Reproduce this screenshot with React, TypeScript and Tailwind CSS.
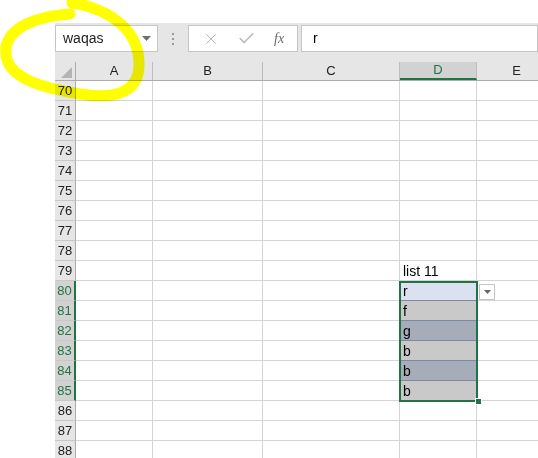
import { X, Check } from "lucide-react";

const cols = [
  { name: "A", w: "w-[77px]" },
  { name: "B", w: "w-[110px]" },
  { name: "C", w: "w-[137px]" },
  { name: "D", w: "w-[77px]" },
  { name: "E", w: "w-[80px]" },
];

const rows = Array.from({ length: 19 }, (_, i) => 70 + i);

// values in column D
const dValues: Record<number, string> = {
  79: "list 11",
  80: "r",
  81: "f",
  82: "g",
  83: "b",
  84: "b",
  85: "b",
};

// fill for the selected list cells
const dFill: Record<number, string> = {
  80: "bg-[#dce1f1] border-b-[#7b88a6]",
  81: "bg-[#c9c9c9] border-b-[#7b88a6]",
  82: "bg-[#a6acb8] border-b-[#7b88a6]",
  83: "bg-[#c9c9c9] border-b-[#7b88a6]",
  84: "bg-[#a6acb8] border-b-[#7b88a6]",
  85: "bg-[#c9c9c9] border-b-[#7b88a6]",
};

const isSel = (r: number) => r >= 80 && r <= 85;

export default function App() {
  return (
    <div
      className="relative w-[538px] h-[458px] overflow-hidden bg-white text-black"
      style={{ fontFamily: '"Liberation Sans", Arial, sans-serif' }}
    >
      <div className="pl-[55px] pt-[23px]">
        {/* Formula bar */}
        <div className="bg-[#e6e6e6] h-[39px] flex items-start pt-[2px]">
          <div className="w-[103px] h-[27px] bg-white border border-[#c6c6c6] flex items-center pl-[7px] pr-[6px]">
            <span className="flex-1 text-[14px] text-[#222]">waqas</span>
            <svg width="9" height="5" viewBox="0 0 9 5">
              <path d="M0 0 L9 0 L4.5 5 Z" fill="#6e6e6e" />
            </svg>
          </div>
          <div className="w-[30px] h-[27px] flex flex-col items-center justify-center gap-[3px]">
            <span className="w-[2px] h-[2px] bg-[#9a9a9a]" />
            <span className="w-[2px] h-[2px] bg-[#9a9a9a]" />
            <span className="w-[2px] h-[2px] bg-[#9a9a9a]" />
          </div>
          <div className="w-[110px] h-[27px] bg-white border border-[#c6c6c6] flex items-center justify-around px-[4px]">
            <X className="w-[18px] h-[18px] text-[#b5b5b5]" strokeWidth={1.3} />
            <Check className="w-[19px] h-[19px] text-[#b5b5b5]" strokeWidth={1.8} />
            <span
              className="text-[14px] italic text-[#6a6a6a]"
              style={{ fontFamily: '"Liberation Serif", "Times New Roman", serif' }}
            >
              fx
            </span>
          </div>
          <div className="ml-[3px] flex-1 h-[27px] bg-white border border-[#c6c6c6] flex items-center pl-[11px] text-[14px]">
            r
          </div>
        </div>

        {/* Column headers */}
        <div className="flex h-[19px] bg-[#e6e6e6] border-b border-[#ababab]">
          <div className="w-[21px] shrink-0 border-r border-[#ababab] relative">
            <svg className="absolute right-[3px] bottom-[2px]" width="11" height="11" viewBox="0 0 11 11">
              <path d="M11 0 L11 11 L0 11 Z" fill="#b4b4b4" />
            </svg>
          </div>
          {cols.map((c) => (
            <div
              key={c.name}
              className={`${c.w} shrink-0 border-r border-[#bdbdbd] flex items-center justify-center text-[13px] ${
                c.name === "D" ? "bg-[#d2d2d2] text-[#217346] border-b-2 border-b-[#217346]" : "text-[#222]"
              }`}
            >
              {c.name}
            </div>
          ))}
        </div>

        {/* Grid */}
        <div className="relative">
          {rows.map((r) => (
            <div key={r} className="flex h-[20px]">
              <div
                className={`w-[21px] shrink-0 border-b border-[#c8c8c8] flex items-center justify-center text-[13px] ${
                  isSel(r)
                    ? "bg-[#d2d2d2] text-[#217346] border-r-2 border-r-[#217346]"
                    : "bg-[#e6e6e6] text-[#222] border-r border-r-[#ababab]"
                }`}
              >
                {r}
              </div>
              {cols.map((c) => {
                const fill = c.name === "D" && dFill[r] ? dFill[r] : "border-b-[#d4d4d4]";
                return (
                  <div
                    key={c.name}
                    className={`${c.w} shrink-0 border-r border-b border-r-[#d4d4d4] ${fill} flex items-end pl-[3px] text-[14px] leading-[17px]`}
                  >
                    {c.name === "D" ? dValues[r] ?? "" : ""}
                  </div>
                );
              })}
            </div>
          ))}

          {/* selection border */}
          <div className="absolute left-[344px] top-[200px] w-[79px] h-[121px] border-2 border-[#217346] pointer-events-none" />
          <div className="absolute left-[420px] top-[317px] w-[7px] h-[7px] bg-[#217346] border border-white" />

          {/* data validation dropdown */}
          <div className="absolute left-[424px] top-[203px] w-[16px] h-[16px] bg-white border border-[#c6c6c6] flex items-center justify-center">
            <svg width="7" height="4" viewBox="0 0 7 4">
              <path d="M0 0 L7 0 L3.5 4 Z" fill="#666" />
            </svg>
          </div>
        </div>
      </div>

      {/* hand-drawn yellow mark */}
      <svg
        className="absolute left-0 top-0 pointer-events-none mix-blend-multiply"
        width="160"
        height="110"
        viewBox="0 0 160 110"
      >
        <path
          d="M72 3 C112 9 140 32 139 66 C138 95 110 99 80 94 C48 89 9 80 6 55 C3 32 28 17 70 14"
          fill="none"
          stroke="#ffff00"
          strokeWidth="11"
          strokeLinecap="round"
          strokeLinejoin="round"
        />
      </svg>
    </div>
  );
}
